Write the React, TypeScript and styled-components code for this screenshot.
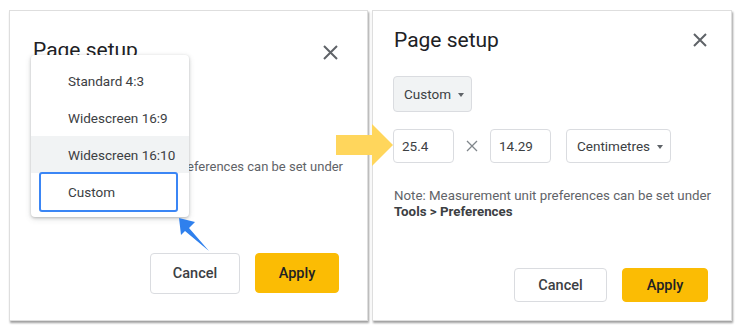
import React from "react";
import styled, { createGlobalStyle } from "styled-components";

const Global = createGlobalStyle`
  html, body { margin: 0; padding: 0; background: #ffffff; }
  body { font-family: Roboto, "Liberation Sans", Arial, sans-serif; }
  * { box-sizing: border-box; }
`;

const Page = styled.div`
  position: relative;
  width: 743px;
  height: 332px;
  display: flex;
  gap: 4px;
  padding: 10px 0 0 9px;
`;

const Dialog = styled.div<{ $w: number; $pt: number; $pl: number; $pr: number; $pb: number }>`
  position: relative;
  width: ${(p) => p.$w}px;
  height: 311px;
  background: #ffffff;
  border: 1px solid #dedede;
  box-shadow: 1px 2px 2px rgba(0, 0, 0, 0.38);
  display: flex;
  flex-direction: column;
  padding: ${(p) => `${p.$pt}px ${p.$pr}px ${p.$pb}px ${p.$pl}px`};
`;

const Header = styled.div`
  display: flex;
  justify-content: space-between;
  align-items: flex-start;
  height: 28px;
`;

const Title = styled.div<{ $size: number }>`
  font-size: ${(p) => p.$size}px;
  line-height: 28px;
  color: #202124;
  padding-left: 1px;
`;

const Close = styled.span<{ $top: number; $right: number }>`
  display: block;
  margin-top: ${(p) => p.$top}px;
  margin-right: ${(p) => p.$right}px;
  line-height: 0;
`;

const Select = styled.div<{ $w: number; $h: number; $filled?: boolean; $mt?: number; $ml?: number }>`
  width: ${(p) => p.$w}px;
  height: ${(p) => p.$h}px;
  margin-top: ${(p) => p.$mt ?? 0}px;
  margin-left: ${(p) => p.$ml ?? 0}px;
  background: ${(p) => (p.$filled ? "#f1f3f4" : "#ffffff")};
  border: 1px solid #dadce0;
  border-radius: 4px;
  display: flex;
  align-items: center;
  padding-left: 10px;
  gap: 7px;
  font-size: 13.5px;
  color: #3c4043;
  flex-shrink: 0;
`;

const Caret = styled.span`
  width: 0;
  height: 0;
  border-left: 3.5px solid transparent;
  border-right: 3.5px solid transparent;
  border-top: 4px solid #5f6368;
  margin-top: 1px;
`;

const InputRow = styled.div`
  display: flex;
  align-items: center;
  margin-top: 17px;
`;

const Input = styled.div`
  width: 61px;
  height: 34px;
  border: 1px solid #dadce0;
  border-radius: 4px;
  display: flex;
  align-items: center;
  padding-left: 8px;
  font-size: 13.5px;
  color: #3c4043;
  flex-shrink: 0;
`;

const Times = styled.span`
  width: 36px;
  display: flex;
  justify-content: center;
  line-height: 0;
`;

const Note = styled.div<{ $mt: number; $size: number }>`
  margin-top: ${(p) => p.$mt}px;
  font-size: ${(p) => p.$size}px;
  line-height: 16px;
  color: #5f6368;
  white-space: nowrap;
  padding-left: 1px;
  b {
    color: #3c4043;
    font-weight: 700;
  }
`;

const Covered = styled.span`
  visibility: hidden;
`;

const Footer = styled.div<{ $gap: number }>`
  margin-top: auto;
  display: flex;
  justify-content: flex-end;
  gap: ${(p) => p.$gap}px;
`;

const Button = styled.div<{ $w: number; $h: number; $primary?: boolean }>`
  width: ${(p) => p.$w}px;
  height: ${(p) => p.$h}px;
  border-radius: 4px;
  display: flex;
  align-items: center;
  justify-content: center;
  font-size: 14.5px;
  font-weight: 500;
  background: ${(p) => (p.$primary ? "#fbbc04" : "#ffffff")};
  border: 1px solid ${(p) => (p.$primary ? "#fbbc04" : "#dadce0")};
  color: ${(p) => (p.$primary ? "#202124" : "#3c4043")};
`;

const Menu = styled.div`
  position: absolute;
  left: 21px;
  top: 44px;
  width: 158px;
  background: #ffffff;
  border-radius: 4px;
  box-shadow: 0 1px 3px rgba(60, 64, 67, 0.3), 0 2px 6px rgba(60, 64, 67, 0.15);
  padding: 7px 0;
`;

const MenuItem = styled.div<{ $hover?: boolean }>`
  position: relative;
  height: 37px;
  display: flex;
  align-items: center;
  padding-left: 37px;
  font-size: 13.5px;
  color: #3c4043;
  background: ${(p) => (p.$hover ? "#f1f3f4" : "transparent")};
`;

const Highlight = styled.span`
  position: absolute;
  left: 8px;
  right: 11px;
  top: -1px;
  bottom: -2px;
  border: 2px solid #3b86f5;
  border-radius: 3px;
`;

const Overlay = styled.svg`
  position: absolute;
  left: 0;
  top: 0;
  pointer-events: none;
`;

const CloseIcon = ({ size }: { size: number }) => (
  <svg width={size + 2} height={size + 2} viewBox={`0 0 ${size + 2} ${size + 2}`}>
    <path
      d={`M1 1 L${size + 1} ${size + 1} M${size + 1} 1 L1 ${size + 1}`}
      stroke="#5f6368"
      strokeWidth="2"
      fill="none"
    />
  </svg>
);

export default function App() {
  return (
    <>
      <Global />
      <Page>
        <Dialog $w={359} $pt={25} $pl={22} $pr={28} $pb={26}>
          <Header>
            <Title $size={21}>Page setup</Title>
            <Close $top={9} $right={1}>
              <CloseIcon size={13} />
            </Close>
          </Header>
          <Note $mt={95} $size={13}>
            <Covered>Note: Measurement unit pr</Covered>eferences can be set under
          </Note>
          <Footer $gap={15}>
            <Button $w={90} $h={41}>Cancel</Button>
            <Button $w={84} $h={40} $primary>Apply</Button>
          </Footer>
          <Menu>
            <MenuItem>Standard 4:3</MenuItem>
            <MenuItem>Widescreen 16:9</MenuItem>
            <MenuItem $hover>Widescreen 16:10</MenuItem>
            <MenuItem>
              Custom
              <Highlight />
            </MenuItem>
          </Menu>
        </Dialog>

        <Dialog $w={360} $pt={15} $pl={20} $pr={23} $pb={18}>
          <Header>
            <Title $size={21}>Page setup</Title>
            <Close $top={7} $right={1}>
              <CloseIcon size={12} />
            </Close>
          </Header>
          <Select $w={79} $h={36} $filled $mt={22}>
            Custom <Caret />
          </Select>
          <InputRow>
            <Input>25.4</Input>
            <Times>
              <svg width="12" height="12" viewBox="0 0 12 12">
                <path d="M1 1 L11 11 M11 1 L1 11" stroke="#80868b" strokeWidth="1.3" fill="none" />
              </svg>
            </Times>
            <Input>14.29</Input>
            <Select $w={105} $h={34} $ml={15}>
              Centimetres <Caret />
            </Select>
          </InputRow>
          <Note $mt={25} $size={13.3}>
            Note: Measurement unit preferences can be set under
            <br />
            <b>Tools &gt; Preferences</b>
          </Note>
          <Footer $gap={15}>
            <Button $w={93} $h={34}>Cancel</Button>
            <Button $w={86} $h={34} $primary>Apply</Button>
          </Footer>
        </Dialog>

        <Overlay width="743" height="332" viewBox="0 0 743 332">
          <polygon
            points="336,135 372,135 372,124 393,145 372,166 372,155 336,155"
            fill="#ffd65c"
          />
          <polygon
            points="179,218 195,222 189,228 209,251 185,231 181,235"
            fill="#2f80ed"
          />
        </Overlay>
      </Page>
    </>
  );
}
